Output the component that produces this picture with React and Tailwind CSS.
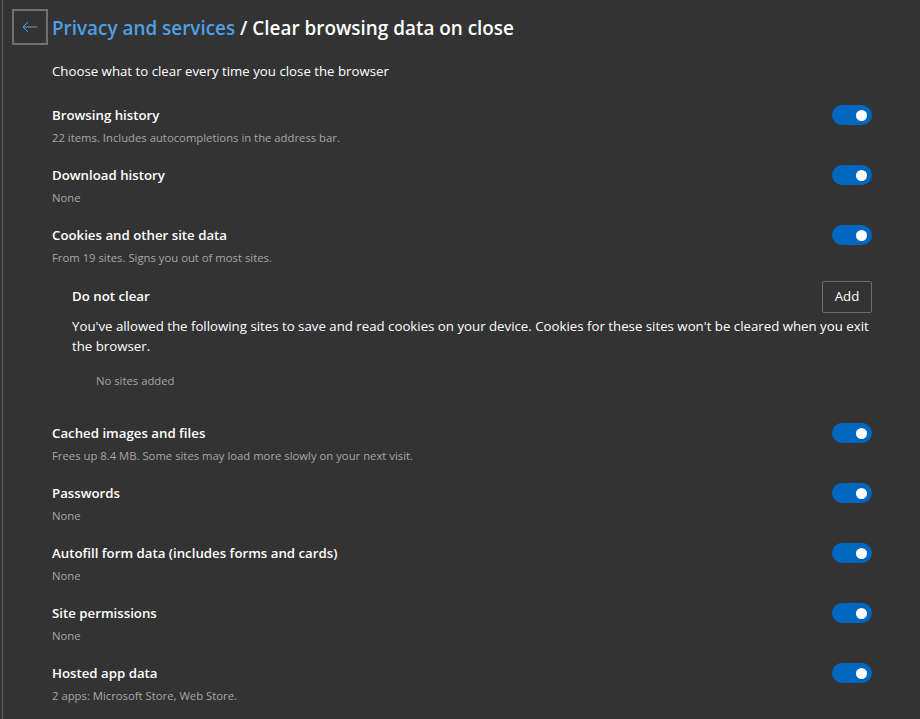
const font = { fontFamily: '"Open Sans", "Noto Sans", sans-serif' };

function Toggle() {
  return (
    <div className="flex h-[20px] w-[40px] items-center justify-end rounded-full bg-[#0067c0] pr-[5px]">
      <div className="h-[11px] w-[11px] rounded-full bg-white" />
    </div>
  );
}

function Row({ title, sub }) {
  return (
    <div className="flex items-start justify-between pt-[10px] pb-[8px]">
      <div>
        <div className="text-[13.25px] font-semibold leading-[20px] text-white">{title}</div>
        <div className="mt-[4px] text-[11.3px] leading-[18px] text-[#a6a6a6]">{sub}</div>
      </div>
      <Toggle />
    </div>
  );
}

export default function App() {
  const top = [
    ['Browsing history', '22 items. Includes autocompletions in the address bar.'],
    ['Download history', 'None'],
  ];
  const bottom = [
    ['Cached images and files', 'Frees up 8.4 MB. Some sites may load more slowly on your next visit.'],
    ['Passwords', 'None'],
    ['Autofill form data (includes forms and cards)', 'None'],
    ['Site permissions', 'None'],
    ['Hosted app data', '2 apps: Microsoft Store, Web Store.'],
  ];

  return (
    <div className="flex h-[719px] w-[920px] overflow-hidden bg-[#333333]" style={font}>
      <div className="ml-[2px] w-px bg-[#5e5e5e]" />
      <div className="flex-1 pr-[48px]">
        <div className="flex items-center pt-[9px]">
          <button className="ml-[9px] flex h-[36px] w-[36px] items-center justify-center border-2 border-[#707070] text-[#4ca0e6]">
            <svg width="16" height="12" viewBox="0 0 16 12" fill="none" stroke="currentColor" strokeWidth="1">
              <path d="M15.5 6H1M6 1L1 6L6 11" />
            </svg>
          </button>
          <h1 className="ml-[4px] mt-[2px] text-[18.9px] font-semibold leading-[28px] text-white">
            <span className="text-[#4ca0e6]">Privacy and services</span> / Clear browsing data on close
          </h1>
        </div>

        <div className="pl-[49px]">
          <p className="mt-[16px] text-[13.25px] leading-[20px] text-white">
            Choose what to clear every time you close the browser
          </p>

          <div className="mt-[14px]">
            {top.map(([t, s]) => (
              <Row key={t} title={t} sub={s} />
            ))}
            <div className="flex items-start justify-between pt-[10px]">
              <div>
                <div className="text-[13.25px] font-semibold leading-[20px] text-white">Cookies and other site data</div>
                <div className="mt-[4px] text-[11.3px] leading-[18px] text-[#a6a6a6]">From 19 sites. Signs you out of most sites.</div>
              </div>
              <Toggle />
            </div>

            <div className="mt-[14px] pl-[20px]">
              <div className="flex items-center justify-between">
                <div className="-mt-[2px] text-[13.25px] font-semibold leading-[20px] text-white">Do not clear</div>
                <button className="h-[32px] w-[50px] rounded-[2px] border border-[#6e6e6e] text-[13.25px] text-white">
                  Add
                </button>
              </div>
              <p className="mt-[3px] text-[13.25px] leading-[20px] text-white">
                You've allowed the following sites to save and read cookies on your device. Cookies for these sites won't be cleared when you exit the browser.
              </p>
              <div className="mt-[16px] pl-[24px] text-[11.3px] leading-[18px] text-[#a6a6a6]">No sites added</div>
            </div>

            <div className="mt-[23px]">
              {bottom.map(([t, s]) => (
                <Row key={t} title={t} sub={s} />
              ))}
            </div>
          </div>
        </div>
      </div>
    </div>
  );
}
